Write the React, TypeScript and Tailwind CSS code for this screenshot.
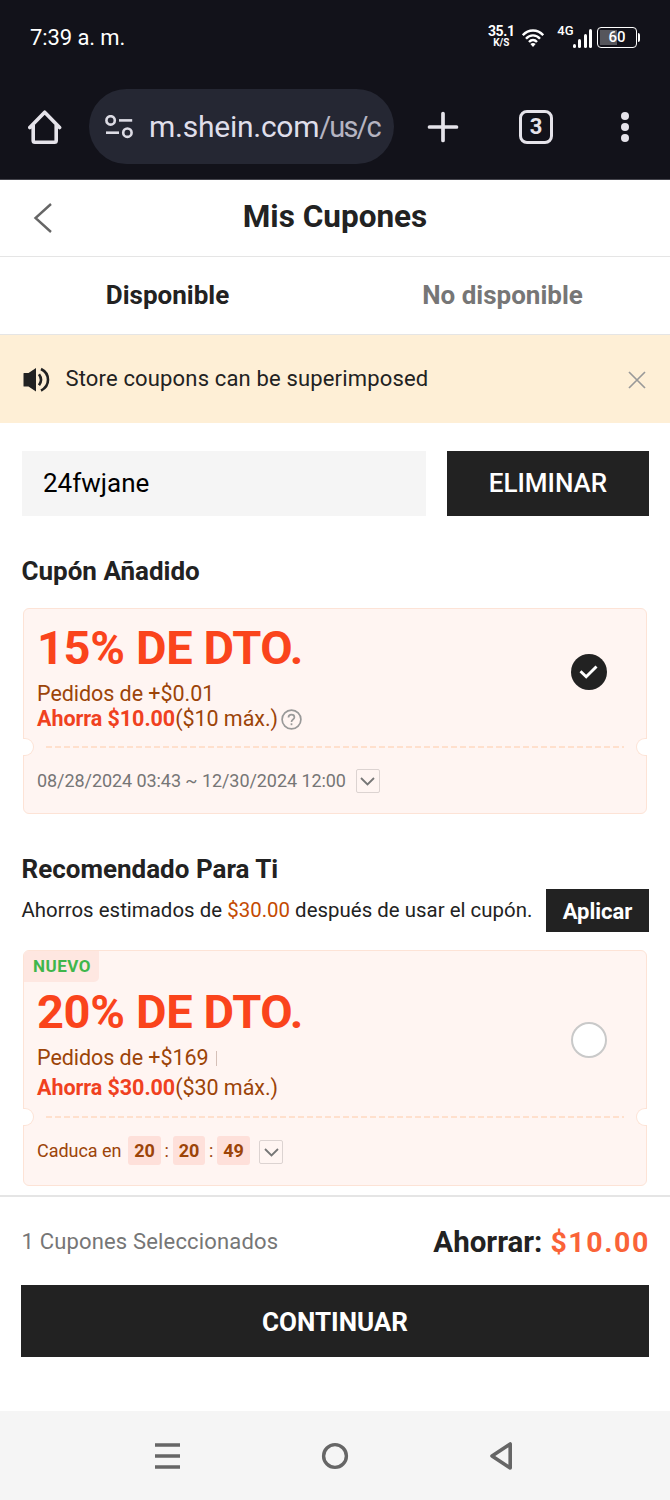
import type { ReactNode } from "react";

interface CouponCardProps {
  title: string;
  order: ReactNode;
  saving: string;
  limit: ReactNode;
  badge?: string;
  selected?: boolean;
  topClass: string;
  footerClass: string;
  orderClass: string;
  savingClass: string;
  checkClass: string;
  children: ReactNode;
}

function StatusBar() {
  return (
    <div className="flex h-[75px] items-center justify-between pl-[30px] pr-[30px] text-white">
      <span className="pt-px text-[22px] leading-none tracking-[-0.1px]">
        7:39 a. m.
      </span>
      <div className="flex items-center">
        <div className="flex w-[26px] flex-col items-center whitespace-nowrap pb-[3px] font-bold leading-none">
          <span className="text-[14px] leading-[13px] tracking-[-0.4px]">35.1</span>
          <span className="text-[10px] leading-[10px]">K/S</span>
        </div>
        <svg className="ml-2 h-[18px] w-[22px]" viewBox="0 0 22 18" fill="none">
          <g stroke="white" strokeWidth="2.4">
            <path d="M0.8 6.2C6.5 0 15.5 0 21.2 6.2" />
            <path d="M4 9.7C8 5.3 14 5.3 18 9.7" />
            <path d="M7 13C9.4 10.4 12.6 10.4 15 13" />
          </g>
          <path d="M8.4 15L11 18L13.6 15C12.2 13.6 9.8 13.6 8.4 15Z" fill="white" />
        </svg>
        <span className="ml-[13px] self-start text-[13px] font-medium leading-[12px]">
          4G
        </span>
        <div className="-ml-px flex h-5 items-end gap-[2.5px]">
          <span className="h-[4px] w-[3px] rounded-full bg-white" />
          <span className="h-[9px] w-[3px] rounded-full bg-white" />
          <span className="h-[14px] w-[3px] rounded-full bg-white" />
          <span className="h-[19px] w-[3px] rounded-full bg-white" />
        </div>
        <div className="ml-[5px] flex h-[21px] w-[40px] rounded-[4px] border-[1.5px] border-white p-[2px]">
          <div className="flex w-full items-center justify-center bg-linear-to-r from-[#56565c] from-50% to-transparent to-50% text-[15px] font-medium leading-none">
            60
          </div>
        </div>
        <span className="ml-px h-[9px] w-[2px] rounded-r bg-white" />
      </div>
    </div>
  );
}

function BrowserBar() {
  return (
    <div className="flex h-[105px] items-start border-b border-[#44444c] pt-[14px]">
      <div className="flex h-[75px] w-[89px] items-center pl-7">
        <svg className="h-[36px] w-[34px]" viewBox="0 0 34 36" fill="none">
          <path
            d="M1.8 18.5L16.7 3.2L31.6 18.5M5.2 16V31.5Q5.2 33.2 6.9 33.2H26.5Q28.2 33.2 28.2 31.5V16"
            stroke="#e5e3ea"
            strokeWidth="3.6"
            strokeLinecap="round"
            strokeLinejoin="round"
          />
        </svg>
      </div>
      <div className="flex h-[75px] w-[305px] items-center rounded-full bg-[#252733] pl-4">
        <svg className="h-6 w-7 shrink-0" viewBox="0 0 28 24" fill="none">
          <g stroke="#dddce5" strokeWidth="2.6">
            <circle cx="5.6" cy="5.4" r="4.2" />
            <path d="M14 5.4H27.2" />
            <path d="M1 17.7H14" />
            <circle cx="22.4" cy="17.7" r="4.2" />
          </g>
        </svg>
        <span className="ml-4 whitespace-nowrap text-[30px] leading-[40px] tracking-[-0.25px] text-[#dfdeea]">
          m.shein.com
          <span className="text-[29px] tracking-[-1.9px] text-[#b5b4c1]">/us/c</span>
        </span>
      </div>
      <div className="flex h-[75px] flex-1 items-center">
        <svg className="ml-[33px] h-8 w-8" viewBox="0 0 32 32">
          <path
            d="M16 2.5V29.5M2.5 16H29.5"
            stroke="#e5e3ea"
            strokeWidth="3.7"
            strokeLinecap="round"
          />
        </svg>
        <div className="ml-[60px] flex h-[34px] w-[34px] items-center justify-center rounded-[8px] border-[3.5px] border-[#e5e3ea] text-[22px] font-bold leading-none text-[#e5e3ea]">
          3
        </div>
        <div className="ml-[68px] flex flex-col gap-[3px]">
          <span className="h-2 w-2 rounded-full bg-[#e5e3ea]" />
          <span className="h-2 w-2 rounded-full bg-[#e5e3ea]" />
          <span className="h-2 w-2 rounded-full bg-[#e5e3ea]" />
        </div>
      </div>
    </div>
  );
}

function ExpandButton() {
  return (
    <span className="flex h-6 w-6 items-center justify-center rounded-[2px] border border-[#dcd3d1]">
      <svg className="mt-px h-[9px] w-[15px]" viewBox="0 0 15 9" fill="none">
        <path d="M1 1L7.5 7.5L14 1" stroke="#767676" strokeWidth="1.8" />
      </svg>
    </span>
  );
}

function CouponCard({
  title,
  order,
  saving,
  limit,
  badge,
  selected,
  topClass,
  footerClass,
  orderClass,
  savingClass,
  checkClass,
  children,
}: CouponCardProps) {
  return (
    <div className="relative mx-[23px] rounded-[6px] border border-[#fde3d6] bg-[#fff5f2]">
      {badge && (
        <span className="absolute left-0 top-0 h-[31px] w-[75px] rounded-br-[5px] rounded-tl-[5px] bg-[#fee7e1] pl-[9px] text-[17px] font-bold leading-[30px] tracking-[0.5px] text-[#3fb64b]">
          {badge}
        </span>
      )}
      <div className={`relative flex items-start justify-between pl-[13px] pr-[39.5px] ${topClass}`}>
        <div>
          <h3 className="whitespace-nowrap text-[47px] font-bold leading-[50px] tracking-[-0.35px] text-[#fa441c]">
            {title}
          </h3>
          <p className={`flex items-center text-[21.5px] tracking-[-0.05px] text-[#9c4408] ${orderClass}`}>
            {order}
          </p>
          <p className={`flex items-center text-[21.5px] tracking-[-0.05px] text-[#9c4408] ${savingClass}`}>
            <b className="text-[#f0411f]">{saving}</b>
            {limit}
          </p>
        </div>
        {selected ? (
          <span className={`flex h-9 w-9 items-center justify-center rounded-full bg-[#222222] ${checkClass}`}>
            <svg className="h-[14px] w-[19px]" viewBox="0 0 19 14" fill="none">
              <path d="M1.5 6.3L7.2 11.8L17.5 1.5" stroke="white" strokeWidth="2.9" />
            </svg>
          </span>
        ) : (
          <span className={`h-9 w-9 rounded-full border-2 border-[#c9c9c9] bg-white ${checkClass}`} />
        )}
        {/* Ticket notches */}
        <span className="absolute -bottom-[9px] -left-px h-[18px] w-[11px] rounded-r-full border border-l-0 border-[#fde3d6] bg-white" />
        <span className="absolute -bottom-[9px] -right-px h-[18px] w-[11px] rounded-l-full border border-r-0 border-[#fde3d6] bg-white" />
        <span className="absolute -bottom-px left-[22px] right-[22px] h-[2px] bg-[repeating-linear-gradient(90deg,#ffe0cd_0_6px,transparent_6px_9px)]" />
      </div>
      <div className={`flex items-center pl-[13px] ${footerClass}`}>{children}</div>
    </div>
  );
}

const countdown = ["20", "20", "49"];

export default function App() {
  return (
    <div className="flex h-[1500px] w-[670px] flex-col overflow-hidden bg-white font-[Roboto,sans-serif] text-[#222222]">
      <header className="bg-[#12121a]">
        <StatusBar />
        <BrowserBar />
      </header>

      <div className="relative flex h-[77px] items-center justify-center border-b border-[#e5e5e5] pb-[2px]">
        <svg className="absolute left-[33px] top-[22px] h-8 w-5" viewBox="0 0 20 32" fill="none">
          <path d="M18 2L2.5 16L18 30" stroke="#666666" strokeWidth="2.4" />
        </svg>
        <h1 className="text-[31.5px] font-bold leading-none">Mis Cupones</h1>
      </div>

      <div className="flex h-[78px] items-center border-b border-[#e5e5e5] text-[26px] font-bold">
        <span className="flex-1 text-center">Disponible</span>
        <span className="flex-1 text-center text-[#767676]">No disponible</span>
      </div>

      <div className="flex h-[88px] items-center bg-[#feefd6] pl-[23px] pr-[24px]">
        <svg className="mt-px h-[26px] w-[27px]" viewBox="0 0 27 26" fill="none">
          <path d="M1 6H5.5L13 1V24.5L5.5 19.5H1Q0.5 19.5 0.5 19V6.5Q0.5 6 1 6Z" fill="#222222" />
          <g stroke="#222222" strokeWidth="2.6">
            <path d="M16 7.3Q20 12.8 16 18.2" />
            <path d="M18 2Q25 5.5 25 12.8Q25 20 18 23.6" />
          </g>
        </svg>
        <span className="ml-[15.5px] flex-1 pb-[2px] text-[22px] tracking-[0.16px]">
          Store coupons can be superimposed
        </span>
        <svg className="mt-px h-[18px] w-[18px]" viewBox="0 0 18 18">
          <path d="M1 1L17 17M17 1L1 17" stroke="#999999" strokeWidth="1.7" />
        </svg>
      </div>

      <div className="mt-7 flex h-[65px] gap-[21px] pl-[22px] pr-[21px]">
        <div className="flex flex-1 items-center bg-[#f5f5f5] pl-[21px] text-[26px] text-black">
          24fwjane
        </div>
        <button className="w-[202px] bg-[#222222] text-[26px] font-medium text-white">
          ELIMINAR
        </button>
      </div>

      <h2 className="mt-[38px] pl-[21.5px] text-[26px] font-bold leading-[34px]">
        Cupón Añadido
      </h2>

      <div className="mt-5">
        <CouponCard
          title="15% DE DTO."
          order="Pedidos de +$0.01"
          saving="Ahorra $10.00"
          selected
          topClass="h-[138px] pt-[14px]"
          orderClass="mt-[8px] leading-[26px]"
          savingClass="leading-[24px]"
          checkClass="mt-[31px]"
          footerClass="h-[66px]"
          limit={
            <>
              ($10 máx.)
              <svg className="ml-[3px] h-[21px] w-[21px]" viewBox="0 0 21 21" fill="none">
                <g stroke="#999999" strokeWidth="1.7">
                  <circle cx="10.5" cy="10.5" r="9.4" />
                  <path d="M7.5 8.5Q7.5 5.6 10.5 5.6Q13.4 5.6 13.4 8.2Q13.4 9.5 12 10.5Q10.5 11.6 10.5 13" />
                  <path d="M10.5 14.3V16.2" />
                </g>
              </svg>
            </>
          }
        >
          <span className="mr-[10px] text-[18px] tracking-[-0.07px] text-[#767676]">
            08/28/2024 03:43 ~ 12/30/2024 12:00
          </span>
          <span className="mt-[2px]">
            <ExpandButton />
          </span>
        </CouponCard>
      </div>

      <h2 className="mt-[37px] pl-[21.5px] text-[26px] font-bold leading-[36px]">
        Recomendado Para Ti
      </h2>
      <div className="mt-[2px] flex h-[43px] items-start justify-between pl-[21.5px] pr-[21px]">
        <p className="whitespace-nowrap pt-[6px] text-[20.4px] leading-[30px] tracking-[0.03px]">
          Ahorros estimados de <span className="text-[#c44a01]">$30.00</span>{" "}
          después de usar el cupón.
        </p>
        <button className="h-[43px] w-[103px] bg-[#222222] pt-px text-[22px] font-bold text-white">
          Aplicar
        </button>
      </div>

      <div className="mt-[18px]">
        <CouponCard
          title="20% DE DTO."
          order={
            <>
              Pedidos de +$169
              <span className="ml-[7px] h-[15px] w-px bg-[#d5c0b8]" />
            </>
          }
          saving="Ahorra $30.00"
          limit="($30 máx.)"
          badge="NUEVO"
          topClass="h-[166px] pt-[36px]"
          orderClass="mt-[6px] leading-[30px]"
          savingClass="leading-[30px]"
          checkClass="mt-[35px]"
          footerClass="h-[68px] pb-px text-[18px] text-[#9c4408]"
        >
          <span className="mr-[7px] tracking-[-0.05px]">Caduca en</span>
          {countdown.map((part, index) => (
            <span key={index} className="flex items-center">
              {index > 0 && <span className="w-[12px] text-center">:</span>}
              <b className="flex h-[29px] w-[32.5px] items-center justify-center rounded-[3px] bg-[#fee0da]">
                {part}
              </b>
            </span>
          ))}
          <span className="ml-[9.5px] mt-[3px]">
            <ExpandButton />
          </span>
        </CouponCard>
      </div>

      <footer className="mt-[9px] border-t-2 border-[#e5e5e5]">
        <div className="flex h-[88px] items-center justify-between pl-[21.5px] pr-[20px]">
          <span className="text-[22px] tracking-[0.17px] text-[#767676]">
            1 Cupones Seleccionados
          </span>
          <span className="flex items-baseline pt-[2px] text-[29.5px] font-bold">
            Ahorrar:
            <span className="ml-[8px] text-[28.5px] tracking-[1.6px] text-[#fa6338]">
              $10.00
            </span>
          </span>
        </div>
        <button className="ml-[21px] block h-[72px] w-[628px] bg-[#222222] pt-[2px] text-[26px] font-bold text-white">
          CONTINUAR
        </button>
      </footer>

      <nav className="mt-auto flex h-[89px] items-center justify-between bg-[#f5f5f5] pl-[155px] pr-[157px]">
        <svg className="h-7 w-[25px]" viewBox="0 0 25 28">
          <path d="M0 3H25M0 14H25M0 25H25" stroke="#666666" strokeWidth="3.5" />
        </svg>
        <svg className="h-7 w-7" viewBox="0 0 28 28" fill="none">
          <circle cx="14" cy="14" r="11.4" stroke="#666666" strokeWidth="3.4" />
        </svg>
        <svg className="h-7 w-[23px]" viewBox="0 0 23 28" fill="none">
          <path
            d="M20.2 2V26L2 14Z"
            stroke="#666666"
            strokeWidth="3.6"
            strokeLinejoin="round"
          />
        </svg>
      </nav>
    </div>
  );
}
